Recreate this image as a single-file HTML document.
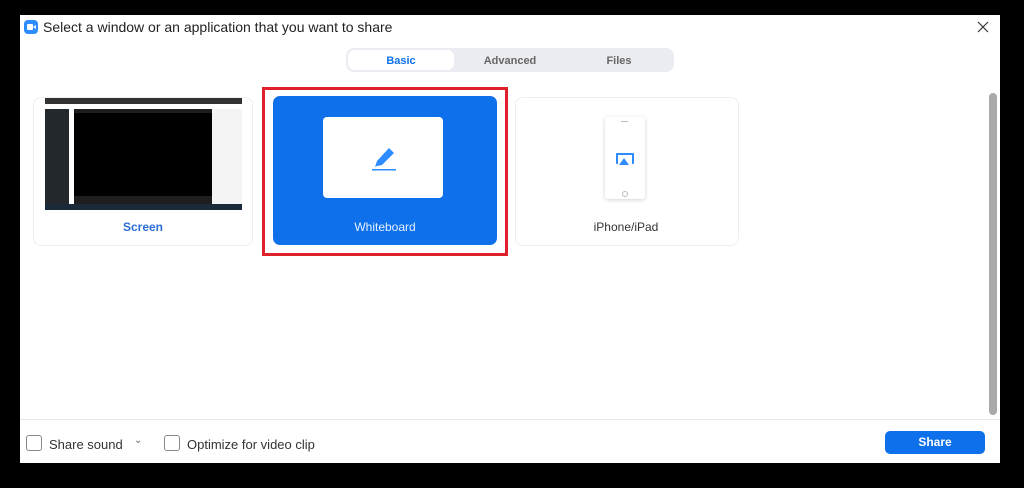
<!DOCTYPE html>
<html><head><style>
body{margin:0;width:1024px;height:488px;background:#000;position:relative;overflow:hidden;font-family:"Liberation Sans",sans-serif}
.a{position:absolute}
.win{left:20px;top:15px;width:980px;height:448px;background:#fff}
</style></head><body>
<div class="a win"></div>
<div class="a" style="left:24px;top:20px;width:14px;height:14px;border-radius:4px;background:#2d8cff"></div>
<div class="a" style="left:27px;top:24px;width:6px;height:6px;background:#fff;border-radius:1px"></div>
<div class="a" style="left:33px;top:25px;width:0;height:0;border-top:2px solid transparent;border-bottom:2px solid transparent;border-right:3px solid #fff"></div>
<div class="a" style="left:43px;top:19px;font-size:14px;color:#222">Select a window or an application that you want to share</div>
<svg class="a" style="left:977px;top:21px" width="12" height="12" viewBox="0 0 12 12"><path d="M1 1L11 11M11 1L1 11" stroke="#333" stroke-width="1.2"/></svg>
<div class="a" style="left:346px;top:48px;width:328px;height:24px;border-radius:8px;background:#ebecf2"></div>
<div class="a" style="left:348px;top:50px;width:106px;height:20px;border-radius:7px;background:#fff"></div>
<div class="a" style="left:348px;top:55px;width:106px;text-align:center;font-size:11px;font-weight:bold;color:#0e71eb">Basic</div>
<div class="a" style="left:456px;top:55px;width:108px;text-align:center;font-size:11px;font-weight:bold;color:#666">Advanced</div>
<div class="a" style="left:564px;top:55px;width:110px;text-align:center;font-size:11px;font-weight:bold;color:#666">Files</div>

<div class="a" style="left:33px;top:97px;width:218px;height:147px;border:1px solid #eee;border-radius:8px"></div>
<div class="a" style="left:45px;top:98px;width:197px;height:112px;background:#1e1e1e"></div>
<div class="a" style="left:45px;top:98px;width:197px;height:6px;background:#333"></div>
<div class="a" style="left:45px;top:104px;width:197px;height:5px;background:#fff"></div>
<div class="a" style="left:45px;top:109px;width:24px;height:95px;background:#23282d"></div>
<div class="a" style="left:74px;top:113px;width:138px;height:83px;background:#000"></div>
<div class="a" style="left:69px;top:109px;width:5px;height:95px;background:#fff"></div>
<div class="a" style="left:212px;top:109px;width:30px;height:95px;background:#f4f4f4"></div>
<div class="a" style="left:45px;top:204px;width:197px;height:6px;background:#1b2a3a"></div>
<div class="a" style="left:33px;top:220px;width:220px;text-align:center;font-size:12px;font-weight:bold;color:#2d6fd6">Screen</div>

<div class="a" style="left:262px;top:87px;width:240px;height:163px;border:3px solid #e0202a"></div>
<div class="a" style="left:273px;top:96px;width:224px;height:149px;border-radius:7px;background:#0e71eb"></div>
<div class="a" style="left:323px;top:117px;width:120px;height:81px;border-radius:4px;background:#fff"></div>
<svg class="a" style="left:368px;top:143px" width="30" height="30" viewBox="0 0 30 30">
<path d="M21 5 L26 10 L14 22 L9 23 L7 24 L8 21 L9 18 Z" fill="#2d8cff"/>
<rect x="4" y="26" width="24" height="1.5" fill="#2d8cff"/></svg>
<div class="a" style="left:273px;top:220px;width:224px;text-align:center;font-size:12px;color:#e6f0ff">Whiteboard</div>

<div class="a" style="left:515px;top:97px;width:222px;height:147px;border:1px solid #eee;border-radius:8px"></div>
<div class="a" style="left:605px;top:117px;width:40px;height:82px;border-radius:3px;background:#fff;box-shadow:0 1px 4px rgba(0,0,0,.18)"></div>
<div class="a" style="left:621px;top:121px;width:7px;height:1px;background:#bbb"></div>
<div class="a" style="left:622px;top:191px;width:4px;height:4px;border:1px solid #bbb;border-radius:50%"></div>
<div class="a" style="left:616px;top:153px;width:14px;height:9px;border:2px solid #2d8cff;border-bottom:none;border-radius:1px"></div>
<div class="a" style="left:619px;top:158px;width:0;height:0;border-left:5px solid transparent;border-right:5px solid transparent;border-bottom:7px solid #2d8cff"></div>
<div class="a" style="left:515px;top:220px;width:222px;text-align:center;font-size:12px;color:#333">iPhone/iPad</div>

<div class="a" style="left:989px;top:93px;width:8px;height:322px;border-radius:4px;background:#aaa"></div>
<div class="a" style="left:20px;top:419px;width:980px;height:1px;background:#e8e8e8"></div>
<div class="a" style="left:26px;top:435px;width:14px;height:14px;border:1px solid #888;border-radius:3px"></div>
<div class="a" style="left:49px;top:437px;font-size:13px;color:#333">Share sound</div>
<div class="a" style="left:134px;top:435px;font-size:10px;color:#666">⌄</div>
<div class="a" style="left:164px;top:435px;width:14px;height:14px;border:1px solid #888;border-radius:3px"></div>
<div class="a" style="left:187px;top:437px;font-size:13px;color:#333">Optimize for video clip</div>
<div class="a" style="left:885px;top:431px;width:100px;height:23px;border-radius:5px;background:#0e71eb;color:#fff;font-size:12px;font-weight:bold;text-align:center;line-height:23px">Share</div>
</body></html>
